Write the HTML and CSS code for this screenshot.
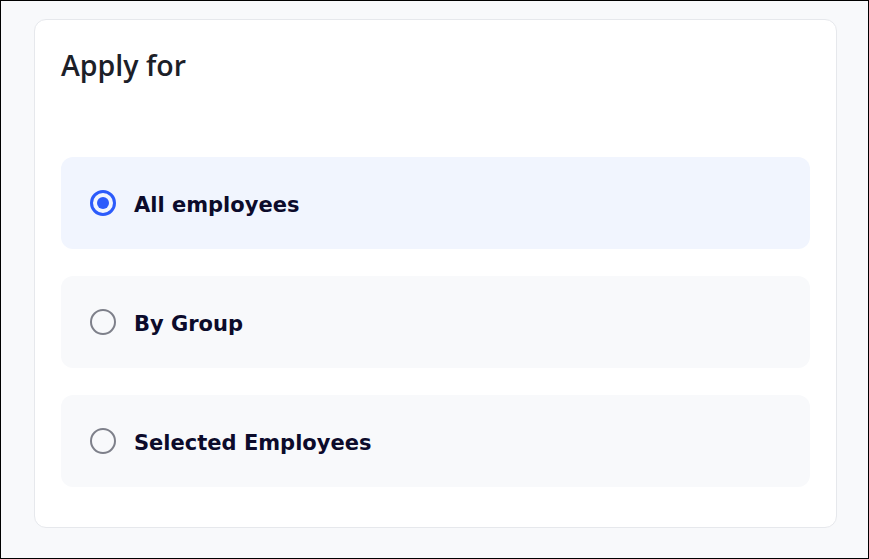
FILE: index.html
```html
<!DOCTYPE html>
<html lang="en">
<head>
<meta charset="utf-8">
<title>Apply for</title>
<link rel="stylesheet" href="styles.css">
</head>
<body>
<div class="frame">
  <section class="card">
    <h2 class="card-title">Apply for</h2>
    <div class="options">
      <label class="option option--active">
        <span class="radio radio--checked"><span class="radio-dot"></span></span>
        <span class="option-label">All employees</span>
      </label>
      <label class="option">
        <span class="radio"></span>
        <span class="option-label">By Group</span>
      </label>
      <label class="option">
        <span class="radio"></span>
        <span class="option-label">Selected Employees</span>
      </label>
    </div>
  </section>
</div>
</body>
</html>
```

FILE: styles.css
```css
* { box-sizing: border-box; }
html, body { margin: 0; padding: 0; height: 100%; }
body {
  background: #f8f9fb;
  font-family: "Open Sans", "Liberation Sans", sans-serif;
}
.frame {
  height: 100%;
  border: 1px solid #000;
  padding: 18px 31px 30px 33px;
}
.card {
  height: 509px;
  background: #fff;
  border: 1px solid #e6e8ec;
  border-radius: 12px;
  padding: 25px 26px 39px 26px;
}
.card-title {
  margin: 0;
  font-family: "Open Sans", sans-serif;
  font-weight: 600;
  font-size: 28.5px;
  line-height: 40px;
  color: #1c2028;
}
.options {
  margin-top: 72px;
  display: flex;
  flex-direction: column;
  gap: 27px;
}
.option {
  height: 92px;
  border-radius: 12px;
  background: #f8f9fb;
  display: flex;
  align-items: center;
  padding-left: 29px;
  gap: 18px;
}
.option--active { background: #f1f5fe; }
.radio {
  width: 26px;
  height: 26px;
  border-radius: 50%;
  border: 2.5px solid #7e808a;
  display: flex;
  align-items: center;
  justify-content: center;
  flex: none;
}
.radio--checked { border: 3px solid #2c5bfb; }
.radio-dot {
  width: 12px;
  height: 12px;
  border-radius: 50%;
  background: #2c5bfb;
}
.option-label {
  padding-top: 3px;
  font-family: "DejaVu Sans", sans-serif;
  font-weight: 700;
  font-size: 21px;
  color: #0c0b2b;
}
```
